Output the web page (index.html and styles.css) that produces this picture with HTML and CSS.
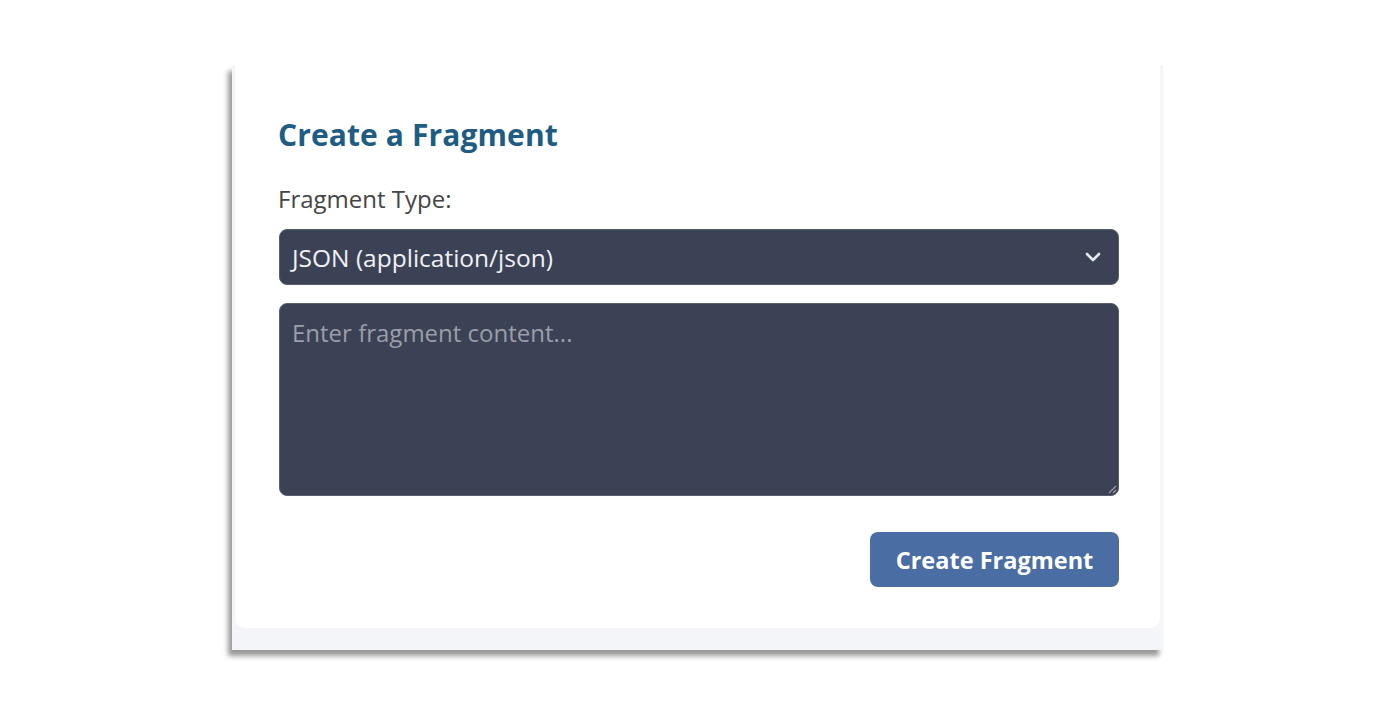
FILE: index.html
```html
<!DOCTYPE html>
<html>
<head>
<meta charset="utf-8">
<link rel="stylesheet" href="styles.css">
</head>
<body>
<div class="stage">
  <div class="frame">
    <div class="card">
      <h2 class="title">Create a Fragment</h2>
      <label class="label" for="type">Fragment Type:</label>
      <div class="select">
        <span class="select-text">JSON (application/json)</span>
        <svg class="chevron" width="18" height="12" viewBox="0 0 18 12"><path d="M3 3 L9 9 L15 3" fill="none" stroke="#e6e8ee" stroke-width="2.6" stroke-linecap="round" stroke-linejoin="round"/></svg>
      </div>
      <div class="textarea">
        <span class="placeholder">Enter fragment content...</span>
        <svg class="grip" width="12" height="12" viewBox="0 0 12 12"><path d="M11 4 L4 11 M11 8 L8 11" stroke="#9a9ea8" stroke-width="1.2"/></svg>
      </div>
      <div class="actions">
        <button class="btn">Create Fragment</button>
      </div>
    </div>
  </div>
</div>
</body>
</html>
```
FILE: styles.css
```css
* { box-sizing: border-box; }
html, body { margin: 0; padding: 0; background: #ffffff; }
body { font-family: "Open Sans", "Noto Sans", sans-serif; }
.stage {
  padding: 65px 0 20px 232px;
}
.frame {
  width: 931px;
  height: 585px;
  background: #f4f5f9;
  padding: 0 3px 22px 3px;
  box-shadow: -4px 6px 5px rgba(0,0,0,0.4);
}
.card {
  background: #ffffff;
  height: 563px;
  border-radius: 0 0 10px 10px;
  padding: 50px 41px 0 43px;
  display: flex;
  flex-direction: column;
}
.title {
  margin: 0;
  font-size: 30px;
  line-height: 40px;
  font-weight: 700;
  color: #1e5c84;
  letter-spacing: 0.1px;
}
.label {
  margin-top: 28px;
  font-size: 24px;
  line-height: 32px;
  color: #454545;
}
.select {
  margin-top: 14px;
  margin-left: 1px;
  height: 56px;
  background: #3c4255;
  border: 1px solid #5a5f6e;
  border-radius: 8px;
  display: flex;
  align-items: center;
  justify-content: space-between;
  padding: 0 16px 0 12px;
}
.select-text {
  color: #f0f1f4;
  font-size: 24.5px;
}
.textarea {
  position: relative;
  margin-top: 18px;
  margin-left: 1px;
  height: 193px;
  background: #3c4255;
  border: 1px solid #5a5f6e;
  border-radius: 8px;
  padding: 14px 12px;
}
.placeholder {
  color: #9a9ea8;
  font-size: 24px;
  line-height: 30px;
}
.grip {
  position: absolute;
  right: 1px;
  bottom: 1px;
}
.actions {
  margin-top: 36px;
  display: flex;
  justify-content: flex-end;
}
.btn {
  width: 249px;
  height: 55px;
  border: none;
  border-radius: 8px;
  background: #4a6ea4;
  color: #ffffff;
  font-family: "Open Sans", "Noto Sans", sans-serif;
  font-size: 23.5px;
  font-weight: 700;
}
```
